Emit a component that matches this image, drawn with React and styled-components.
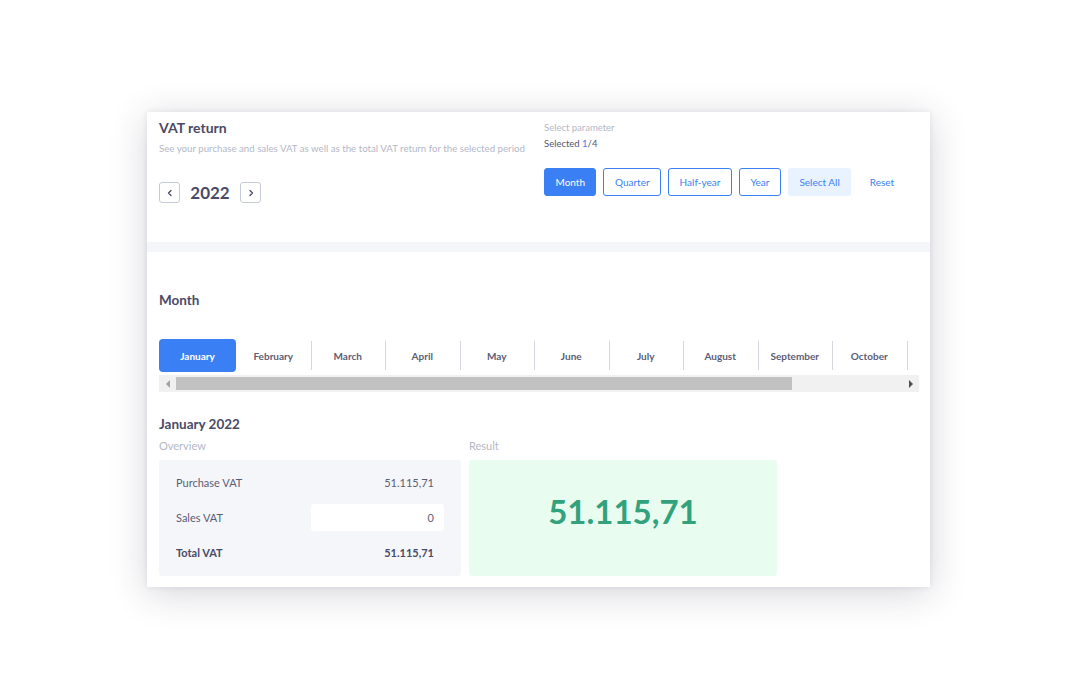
import React, { useState } from "react";
import styled, { createGlobalStyle } from "styled-components";

const GlobalStyle = createGlobalStyle`
  html, body {
    margin: 0;
    padding: 0;
    background: #ffffff;
    font-family: Lato, "Open Sans", sans-serif;
  }
  * { box-sizing: border-box; }
`;

const Page = styled.div`
  width: 1080px;
  height: 700px;
  padding: 112px 0 0 147px;
`;

const Card = styled.div`
  width: 783px;
  height: 475px;
  background: #fff;
  box-shadow: 0 6px 36px rgba(40, 40, 70, 0.2), 0 0 6px rgba(40, 40, 70, 0.08);
  display: flex;
  flex-direction: column;
`;

const Header = styled.section`
  height: 123px;
  display: flex;
  padding: 7px 12px 0 12px;
  border-bottom: 10px solid #f5f6fa;
  box-sizing: content-box;
`;

const HeaderLeft = styled.div`
  flex: 0 0 385px;
  min-width: 0;
  display: flex;
  flex-direction: column;
`;

const Title = styled.h1`
  margin: 0;
  font-size: 14px;
  line-height: 18px;
  font-weight: 700;
  color: #4a4a66;
`;

const Subtitle = styled.p`
  margin: 4px 0 0;
  font-size: 9.7px;
  line-height: 14px;
  color: #b4b8c6;
  white-space: nowrap;
`;

const YearRow = styled.div`
  margin-top: 27px;
  display: flex;
  align-items: center;
  gap: 10px;
`;

const ArrowBtn = styled.button`
  width: 21px;
  height: 21px;
  padding: 0;
  border: 1px solid #c6cad6;
  border-radius: 3px;
  background: #fff;
  display: flex;
  align-items: center;
  justify-content: center;
  color: #4a4a66;
  cursor: pointer;
`;

const Year = styled.span`
  font-size: 17px;
  font-weight: 700;
  color: #4a4a66;
  width: 40px;
  text-align: center;
`;

const HeaderRight = styled.div`
  display: flex;
  flex-direction: column;
  padding-top: 2px;
`;

const ParamLabel = styled.div`
  font-size: 9.5px;
  line-height: 14px;
  color: #b4b8c6;
`;

const Selected = styled.div`
  margin-top: 2px;
  font-size: 9.5px;
  line-height: 14px;
  color: #55566e;

  b {
    font-weight: 400;
    color: #3b7ff5;
  }
`;

const Buttons = styled.div`
  margin-top: 17px;
  display: flex;
  align-items: center;
  gap: 7px;
`;

const PeriodBtn = styled.button`
  height: 28px;
  padding: 0 10.5px;
  font-family: inherit;
  font-size: 10px;
  white-space: nowrap;
  border-radius: 3px;
  cursor: pointer;
  border: 1px solid
    ${(p) => (p.$variant === "soft" || p.$variant === "text" ? "transparent" : "#3b7ff5")};
  background: ${(p) =>
    p.$variant === "solid" ? "#3b7ff5" : p.$variant === "soft" ? "#e9f2ff" : "#fff"};
  color: ${(p) => (p.$variant === "solid" ? "#fff" : "#3b7ff5")};
`;

const Body = styled.section`
  flex: 1;
  padding: 40px 11px 11px 12px;
  display: flex;
  flex-direction: column;
`;

const SectionTitle = styled.h2`
  margin: 0;
  font-size: 13.5px;
  line-height: 16px;
  font-weight: 700;
  color: #4a4a66;
`;

const TabsWrap = styled.div`
  margin-top: 31px;
  width: 760px;
`;

const TabRow = styled.div`
  height: 33px;
  display: flex;
  overflow: hidden;
`;

const Tab = styled.div`
  flex: 0 0 ${(p) => (p.$first ? 77 : 74.5)}px;
  height: 33px;
  display: flex;
  align-items: center;
  justify-content: center;
  font-size: 10px;
  font-weight: 700;
  border-radius: ${(p) => (p.$active ? 4 : 0)}px;
  background: ${(p) => (p.$active ? "#3b7ff5" : "transparent")};
  color: ${(p) => (p.$active ? "#fff" : "#5b5d76")};
  position: relative;

  &::before {
    content: "";
    display: ${(p) => (p.$divider ? "block" : "none")};
    position: absolute;
    left: 0;
    top: 2px;
    bottom: 2px;
    width: 1px;
    background: #d3d6e0;
  }
`;

const ScrollBar = styled.div`
  margin-top: 3px;
  height: 17px;
  background: #f1f1f1;
  display: flex;
  align-items: center;
`;

const ScrollArrow = styled.div`
  flex: 0 0 17px;
  height: 17px;
  display: flex;
  align-items: center;
  justify-content: center;

  &::after {
    content: "";
    border-top: 4px solid transparent;
    border-bottom: 4px solid transparent;
    ${(p) =>
      p.$dir === "left"
        ? "border-right: 4px solid #a3a3a3;"
        : "border-left: 4px solid #505050;"}
  }
`;

const ScrollTrack = styled.div`
  flex: 1;
  height: 17px;
  display: flex;
  align-items: center;
`;

const ScrollThumb = styled.div`
  height: 13px;
  background: #c1c1c1;
`;

const PeriodTitle = styled.h3`
  margin: 24px 0 0;
  font-size: 13.5px;
  line-height: 16px;
  font-weight: 700;
  color: #4a4a66;
`;

const Panels = styled.div`
  margin-top: 7px;
  display: flex;
  gap: 8px;
`;

const Panel = styled.div`
  width: ${(p) => p.$w}px;
  display: flex;
  flex-direction: column;
`;

const PanelLabel = styled.div`
  font-size: 11px;
  line-height: 14px;
  color: #b4b8c6;
`;

const OverviewBox = styled.div`
  margin-top: 7px;
  height: 116px;
  background: #f5f6fa;
  border-radius: 3px;
  padding: 5px 17px 0 17px;
  display: flex;
  flex-direction: column;
`;

const Row = styled.div`
  height: 35px;
  display: flex;
  align-items: center;
  justify-content: space-between;
  font-size: 11px;
  color: ${(p) => (p.$bold ? "#4a4a66" : "#5b5d76")};
  font-weight: ${(p) => (p.$bold ? 700 : 400)};
`;

const Value = styled.span`
  padding-right: 10px;
`;

const VatInput = styled.input`
  width: 133px;
  height: 27px;
  border: none;
  border-radius: 3px;
  background: #fff;
  text-align: right;
  padding: 0 10px;
  font-family: inherit;
  font-size: 11px;
  color: #5b5d76;
  outline: none;
`;

const ResultBox = styled.div`
  margin-top: 7px;
  height: 116px;
  background: #e9fcf0;
  border-radius: 3px;
  display: flex;
  align-items: center;
  justify-content: center;
  font-size: 33px;
  font-weight: 700;
  color: #32a27c;
  padding-bottom: 14px;
`;

const Chevron = ({ dir }) => (
  <svg width="8" height="8" viewBox="0 0 8 8" fill="none">
    <path
      d={dir === "left" ? "M5 1.5 2.5 4 5 6.5" : "M3 1.5 5.5 4 3 6.5"}
      stroke="currentColor"
      strokeWidth="1.3"
      strokeLinecap="round"
      strokeLinejoin="round"
    />
  </svg>
);

const months = [
  "January",
  "February",
  "March",
  "April",
  "May",
  "June",
  "July",
  "August",
  "September",
  "October",
];

export default function App() {
  const [year] = useState(2022);
  const [salesVat, setSalesVat] = useState("0");

  return (
    <>
      <GlobalStyle />
      <Page>
        <Card>
          <Header>
            <HeaderLeft>
              <Title>VAT return</Title>
              <Subtitle>
                See your purchase and sales VAT as well as the total VAT return for the selected period
              </Subtitle>
              <YearRow>
                <ArrowBtn aria-label="Previous year">
                  <Chevron dir="left" />
                </ArrowBtn>
                <Year>{year}</Year>
                <ArrowBtn aria-label="Next year">
                  <Chevron dir="right" />
                </ArrowBtn>
              </YearRow>
            </HeaderLeft>
            <HeaderRight>
              <ParamLabel>Select parameter</ParamLabel>
              <Selected>
                Selected <b>1</b>/4
              </Selected>
              <Buttons>
                <PeriodBtn $variant="solid">Month</PeriodBtn>
                <PeriodBtn>Quarter</PeriodBtn>
                <PeriodBtn>Half-year</PeriodBtn>
                <PeriodBtn>Year</PeriodBtn>
                <PeriodBtn $variant="soft">Select All</PeriodBtn>
                <PeriodBtn $variant="text">Reset</PeriodBtn>
              </Buttons>
            </HeaderRight>
          </Header>

          <Body>
            <SectionTitle>Month</SectionTitle>
            <TabsWrap>
              <TabRow>
                {months.map((m, i) => (
                  <Tab key={m} $first={i === 0} $active={i === 0} $divider={i > 1}>
                    {m}
                  </Tab>
                ))}
                <Tab $divider />
              </TabRow>
              <ScrollBar>
                <ScrollArrow $dir="left" />
                <ScrollTrack>
                  <ScrollThumb style={{ width: `${(616 / 726) * 100}%` }} />
                </ScrollTrack>
                <ScrollArrow $dir="right" />
              </ScrollBar>
            </TabsWrap>

            <PeriodTitle>January {year}</PeriodTitle>
            <Panels>
              <Panel $w={302}>
                <PanelLabel>Overview</PanelLabel>
                <OverviewBox>
                  <Row>
                    <span>Purchase VAT</span>
                    <Value>51.115,71</Value>
                  </Row>
                  <Row>
                    <span>Sales VAT</span>
                    <VatInput value={salesVat} onChange={(e) => setSalesVat(e.target.value)} />
                  </Row>
                  <Row $bold>
                    <span>Total VAT</span>
                    <Value>51.115,71</Value>
                  </Row>
                </OverviewBox>
              </Panel>
              <Panel $w={308}>
                <PanelLabel>Result</PanelLabel>
                <ResultBox>51.115,71</ResultBox>
              </Panel>
            </Panels>
          </Body>
        </Card>
      </Page>
    </>
  );
}
